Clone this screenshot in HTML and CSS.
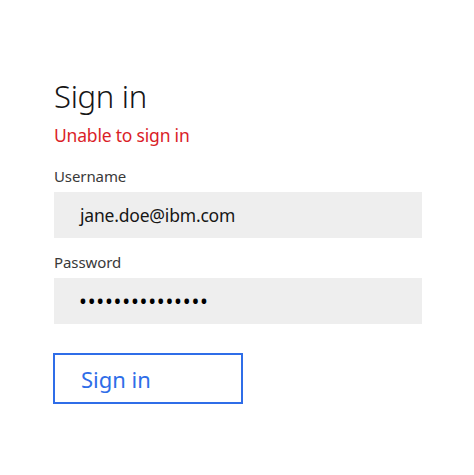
FILE: index.html
```html
<!DOCTYPE html>
<html>
<head>
<meta charset="utf-8">
<link rel="stylesheet" href="styles.css">
</head>
<body>
<main class="form">
  <h1 class="title">Sign in</h1>
  <p class="error">Unable to sign in</p>
  <label class="label">Username</label>
  <div class="field">jane.doe@ibm.com</div>
  <label class="label label-second">Password</label>
  <div class="field field-password">•••••••••••••••</div>
  <button class="btn">Sign in</button>
</main>
</body>
</html>
```
FILE: styles.css
```css
* { box-sizing: border-box; }
html, body { margin: 0; padding: 0; background: #ffffff; }
body { font-family: "Noto Sans", "Open Sans", sans-serif; width: 474px; height: 475px; overflow: hidden; }
.form { display: flex; flex-direction: column; align-items: flex-start; padding: 76px 52px 0 54px; }
.title { margin: 0; font-size: 31px; font-weight: 300; color: #161616; line-height: 40px; letter-spacing: -0.3px; }
.error { margin: 7px 0 0; font-size: 17.5px; color: #da1e28; line-height: 24px; letter-spacing: -0.2px; }
.label { margin-top: 19px; font-size: 15px; color: #393939; line-height: 20px; letter-spacing: -0.1px; }
.label-second { margin-top: 14px; }
.field { margin-top: 6px; width: 368px; height: 46px; background: #eeeeee; padding-left: 26px; display: flex; align-items: center; font-size: 17.5px; color: #161616; letter-spacing: -0.2px; }
.field-password { font-size: 21px; letter-spacing: 0.75px; color: #000; padding-left: 25px; }
.btn { margin-top: 29px; margin-left: -1px; width: 190px; height: 51px; border: 2px solid #2f6de8; background: #fff; color: #2f6de8; font-family: inherit; font-size: 22px; text-align: left; padding: 0 0 0 26px; }
```
